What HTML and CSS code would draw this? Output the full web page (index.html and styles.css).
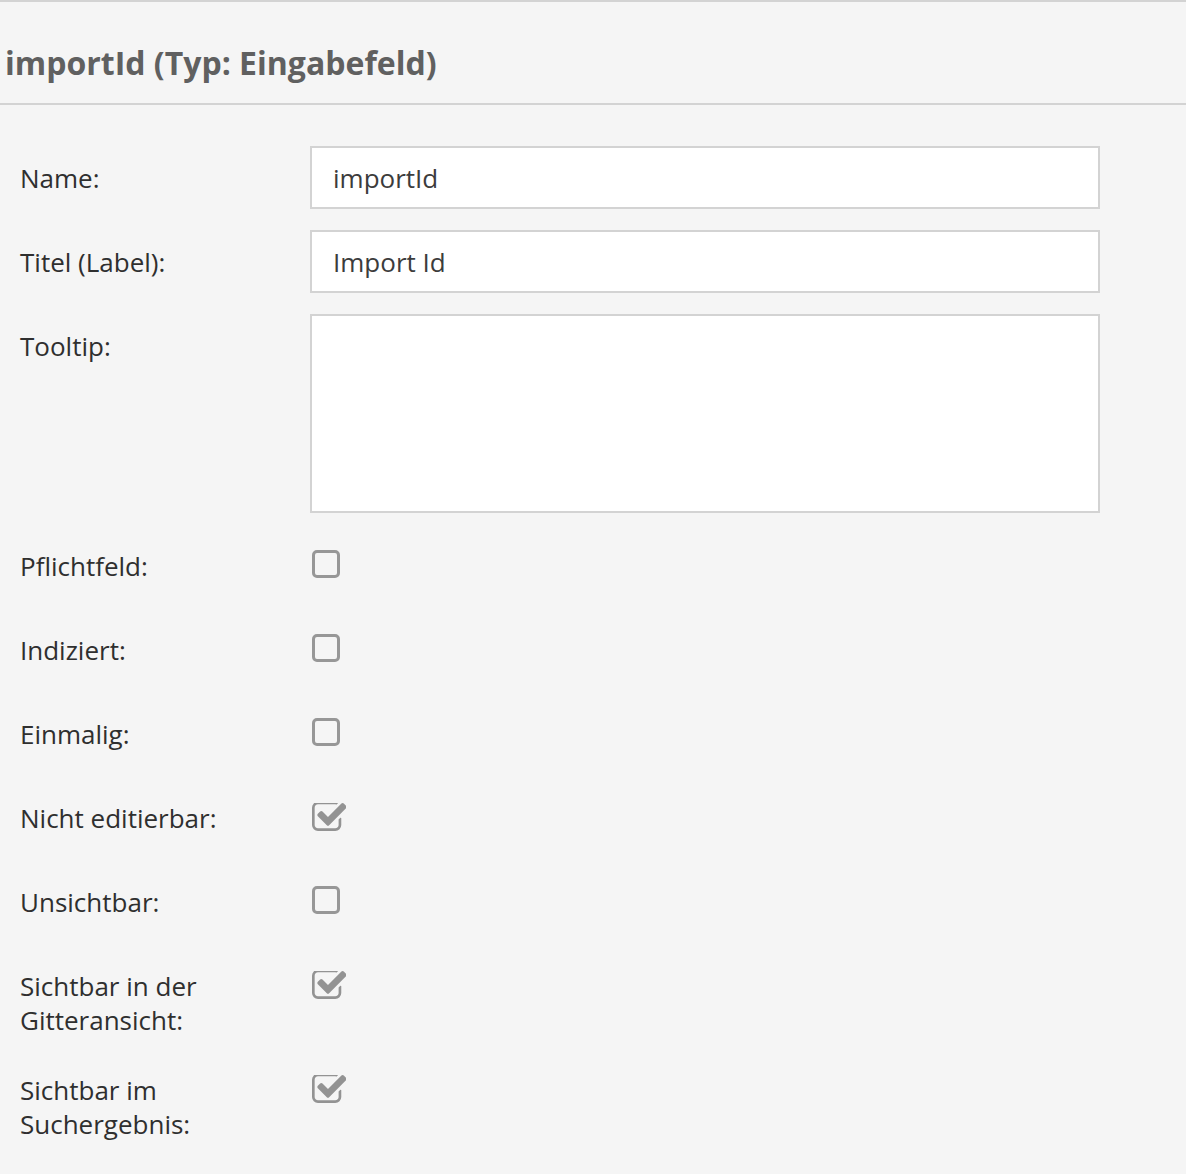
FILE: index.html
```html
<!DOCTYPE html>
<html lang="de">
<head>
<meta charset="utf-8">
<title>importId</title>
<link rel="stylesheet" href="styles.css">
</head>
<body>
<div class="page">
  <div class="header">
    <h1 class="title">importId (Typ: Eingabefeld)</h1>
  </div>
  <form class="form">
    <label class="label">Name:</label>
    <div class="field"><input class="input" type="text" value="importId"></div>

    <label class="label">Titel (Label):</label>
    <div class="field"><input class="input" type="text" value="Import Id"></div>

    <label class="label">Tooltip:</label>
    <div class="field"><textarea class="textarea"></textarea></div>

    <label class="label">Pflichtfeld:</label>
    <div class="field"><span class="box"></span></div>

    <label class="label">Indiziert:</label>
    <div class="field"><span class="box"></span></div>

    <label class="label">Einmalig:</label>
    <div class="field"><span class="box"></span></div>

    <label class="label">Nicht editierbar:</label>
    <div class="field"><svg class="checked" viewBox="64 192 1664 1344"><path d="M1472 930v318q0 119-84.5 203.5t-203.5 84.5h-832q-119 0-203.5-84.5t-84.5-203.5v-832q0-119 84.5-203.5t203.5-84.5h832q63 0 117 25 15 7 18 23 3 17-9 29l-49 49q-10 10-23 10-3 0-9-2-23-6-45-6h-832q-66 0-113 47t-47 113v832q0 66 47 113t113 47h832q66 0 113-47t47-113v-254q0-13 9-22l64-64q10-10 23-10 6 0 12 3 20 8 20 29zm231-489l-814 814q-24 24-57 24t-57-24l-430-430q-24-24-24-57t24-57l110-110q24-24 57-24t57 24l263 263 647-647q24-24 57-24t57 24l110 110q24 24 24 57t-24 57z"/></svg></div>

    <label class="label">Unsichtbar:</label>
    <div class="field"><span class="box"></span></div>

    <label class="label">Sichtbar in der Gitteransicht:</label>
    <div class="field"><svg class="checked" viewBox="64 192 1664 1344"><path d="M1472 930v318q0 119-84.5 203.5t-203.5 84.5h-832q-119 0-203.5-84.5t-84.5-203.5v-832q0-119 84.5-203.5t203.5-84.5h832q63 0 117 25 15 7 18 23 3 17-9 29l-49 49q-10 10-23 10-3 0-9-2-23-6-45-6h-832q-66 0-113 47t-47 113v832q0 66 47 113t113 47h832q66 0 113-47t47-113v-254q0-13 9-22l64-64q10-10 23-10 6 0 12 3 20 8 20 29zm231-489l-814 814q-24 24-57 24t-57-24l-430-430q-24-24-24-57t24-57l110-110q24-24 57-24t57 24l263 263 647-647q24-24 57-24t57 24l110 110q24 24 24 57t-24 57z"/></svg></div>

    <label class="label">Sichtbar im Suchergebnis:</label>
    <div class="field"><svg class="checked" viewBox="64 192 1664 1344"><path d="M1472 930v318q0 119-84.5 203.5t-203.5 84.5h-832q-119 0-203.5-84.5t-84.5-203.5v-832q0-119 84.5-203.5t203.5-84.5h832q63 0 117 25 15 7 18 23 3 17-9 29l-49 49q-10 10-23 10-3 0-9-2-23-6-45-6h-832q-66 0-113 47t-47 113v832q0 66 47 113t113 47h832q66 0 113-47t47-113v-254q0-13 9-22l64-64q10-10 23-10 6 0 12 3 20 8 20 29zm231-489l-814 814q-24 24-57 24t-57-24l-430-430q-24-24-24-57t24-57l110-110q24-24 57-24t57 24l263 263 647-647q24-24 57-24t57 24l110 110q24 24 24 57t-24 57z"/></svg></div>
  </form>
</div>
</body>
</html>
```
FILE: styles.css
```css
html, body {
  margin: 0;
  padding: 0;
  background: #f5f5f5;
}

body {
  font-family: "Open Sans", "Noto Sans", sans-serif;
  color: #333;
}

.page {
  border-top: 2px solid #d3d3d3;
  min-height: 1172px;
}

.header {
  border-bottom: 2px solid #d3d3d3;
  padding: 41px 0 20px 5px;
}

.title {
  margin: 0;
  font-size: 32px;
  line-height: 40px;
  font-weight: 700;
  color: #606060;
}

.form {
  display: grid;
  grid-template-columns: 290px 790px;
  grid-auto-rows: minmax(63px, auto);
  row-gap: 21px;
  padding: 41px 0 0 20px;
}

.label {
  font-size: 26px;
  line-height: 34px;
  padding: 15px 20px 0 0;
  color: #2f2f2f;
}

.field {
  display: flex;
  align-items: flex-start;
}

.input {
  box-sizing: border-box;
  width: 790px;
  height: 63px;
  border: 2px solid #d3d3d3;
  background: #fff;
  padding: 0 21px;
  margin: 0;
  font-family: "Open Sans", "Noto Sans", sans-serif;
  font-size: 26px;
  color: #3c3c3c;
  outline: none;
  border-radius: 0;
}

.textarea {
  box-sizing: border-box;
  width: 790px;
  height: 199px;
  border: 2px solid #d3d3d3;
  background: #fff;
  margin: 0;
  padding: 10px 21px;
  resize: none;
  font-family: "Open Sans", "Noto Sans", sans-serif;
  font-size: 26px;
  border-radius: 0;
  display: block;
}

.box {
  box-sizing: border-box;
  display: block;
  width: 28px;
  height: 28px;
  margin: 16px 0 0 1.5px;
  border: 3px solid #979797;
  border-radius: 5px;
}

.checked {
  display: block;
  width: 34.6px;
  height: 28px;
  margin: 17px 0 0 1.7px;
  fill: #939393;
}
```
